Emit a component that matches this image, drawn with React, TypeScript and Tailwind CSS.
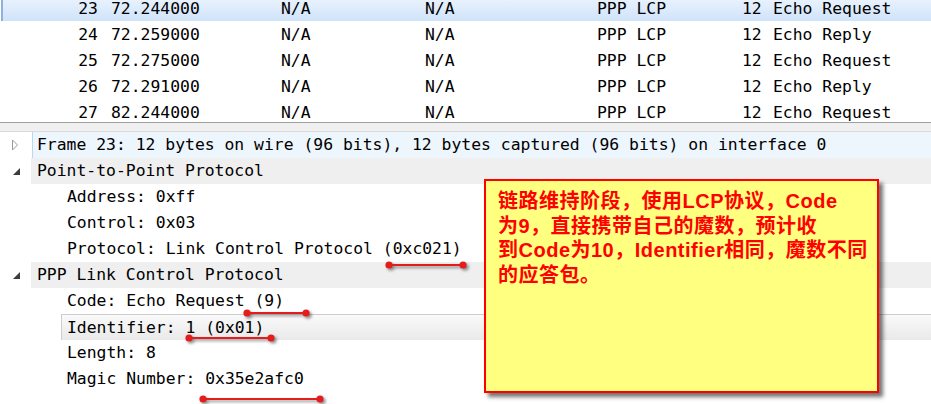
import React from "react";

const packets = [
  { no: 23, time: "72.244000", info: "Echo Request", sel: true },
  { no: 24, time: "72.259000", info: "Echo Reply" },
  { no: 25, time: "72.275000", info: "Echo Request" },
  { no: 26, time: "72.291000", info: "Echo Reply" },
  { no: 27, time: "82.244000", info: "Echo Request" },
];

function Collapsed() {
  return (
    <svg width="8" height="12" viewBox="0 0 8 12" className="block">
      <path d="M1.5 1 L6.5 6 L1.5 11 Z" fill="none" stroke="#9a9a9a" strokeWidth="1" />
    </svg>
  );
}

function Expanded() {
  return (
    <svg width="9" height="9" viewBox="0 0 9 9" className="block">
      <path d="M8 1 L8 8 L1 8 Z" fill="#3c3c3c" />
    </svg>
  );
}

function TopRow({
  icon,
  text,
  bg,
}: {
  icon: React.ReactNode;
  text: string;
  bg: string;
}) {
  return (
    <div className="flex h-[26px] items-stretch">
      <div className="flex w-[31px] items-center justify-center pl-[1px]">{icon}</div>
      <div className={"flex flex-1 items-center whitespace-nowrap pt-[1px] " + bg}>{text}</div>
    </div>
  );
}

function Child({ text, focused }: { text: string; focused?: boolean }) {
  return (
    <div className="flex h-[26px] items-stretch">
      <div className="w-[61px]" />
      <div
        className={
          "flex flex-1 items-center whitespace-nowrap pt-[1px] " +
          (focused
            ? "border-t border-l border-[#cdcdcd] bg-gradient-to-b from-[#fafafa] to-[#e9e9e9] pl-[5px]"
            : "pl-[6px]")
        }
      >
        {text}
      </div>
    </div>
  );
}

export default function App() {
  return (
    <div
      className="relative h-[404px] w-[931px] overflow-hidden bg-white text-[16.4px] text-black"
      style={{ fontFamily: '"DejaVu Sans Mono", monospace' }}
    >
      {/* packet list */}
      <div className="h-[123px] overflow-hidden border-b border-[#a0a0a0]">
        <div className="-mt-[5px]">
          {packets.map((p) => (
            <div
              key={p.no}
              className={
                "flex h-[26px] items-center whitespace-nowrap pt-[2px] leading-[16px] " +
                (p.sel
                  ? "ml-px border-l-2 border-[#8db2de] bg-gradient-to-b from-[#eef5fe] to-[#cfe3fa]"
                  : "")
              }
            >
              <div className={(p.sel ? "w-[95px]" : "w-[98px]") + " text-right"}>{p.no}</div>
              <div className="w-[13px]" />
              <div className="w-[170px]">{p.time}</div>
              <div className="w-[144px]">N/A</div>
              <div className="w-[172px]">N/A</div>
              <div className="w-[145px]">PPP LCP</div>
              <div className="w-[31px]">12</div>
              <div>{p.info}</div>
            </div>
          ))}
        </div>
      </div>
      <div className="h-[9px] border-b border-[#dadada] bg-[#f0f0f0]" />

      {/* detail tree */}
      <div>
        <div className="flex h-[26px] items-stretch">
          <div className="flex w-[32px] items-center justify-center pr-[2px]">
            <Collapsed />
          </div>
          <div className="flex flex-1 items-center whitespace-nowrap border-l border-[#b9d6f4] bg-[#edf5fd] pl-[4px] pt-[1px]">
            Frame 23: 12 bytes on wire (96 bits), 12 bytes captured (96 bits) on interface 0
          </div>
        </div>
        <TopRow icon={<Expanded />} text="Point-to-Point Protocol" bg="bg-[#efefef] pl-[6px]" />
        <Child text="Address: 0xff" />
        <Child text="Control: 0x03" />
        <Child text="Protocol: Link Control Protocol (0xc021)" />
        <TopRow icon={<Expanded />} text="PPP Link Control Protocol" bg="bg-[#efefef] pl-[6px]" />
        <Child text="Code: Echo Request (9)" />
        <Child text="Identifier: 1 (0x01)" focused />
        <Child text="Length: 8" />
        <Child text="Magic Number: 0x35e2afc0" />
      </div>

      {/* red annotation lines */}
      <svg
        className="pointer-events-none absolute left-0 top-0"
        width="931"
        height="404"
        viewBox="0 0 931 404"
        style={{ filter: "drop-shadow(2px 2px 1.5px rgba(0,0,0,0.45))" }}
      >
        {[
          [389, 265, 463, 265],
          [247, 313, 306, 313],
          [189, 338, 271, 338],
          [203, 399, 320, 399],
        ].map(([x1, y1, x2, y2], i) => (
          <g key={i}>
            <line x1={x1} y1={y1} x2={x2} y2={y2} stroke="#e41c1c" strokeWidth="2.2" />
            <circle cx={x1} cy={y1} r="3.6" fill="#e41c1c" />
            <circle cx={x2} cy={y2} r="3.6" fill="#e41c1c" />
          </g>
        ))}
      </svg>

      {/* yellow note */}
      <div className="absolute left-[484px] top-[179px] h-[214px] w-[395px] border-2 border-[#ff0000] bg-[#ffff80] pl-[12px] pt-[8px] shadow-[4px_4px_4px_rgba(0,0,0,0.55)]">
        <div
          className="whitespace-nowrap text-[20px] font-bold leading-[24.5px] tracking-[0.5px] text-[#ff0000]"
          style={{ fontFamily: '"Liberation Sans", "Noto Sans CJK SC", sans-serif' }}
        >
          <div>链路维持阶段，使用LCP协议，Code</div>
          <div>为9，直接携带自己的魔数，预计收</div>
          <div>到Code为10，Identifier相同，魔数不同</div>
          <div>的应答包。</div>
        </div>
      </div>
    </div>
  );
}
